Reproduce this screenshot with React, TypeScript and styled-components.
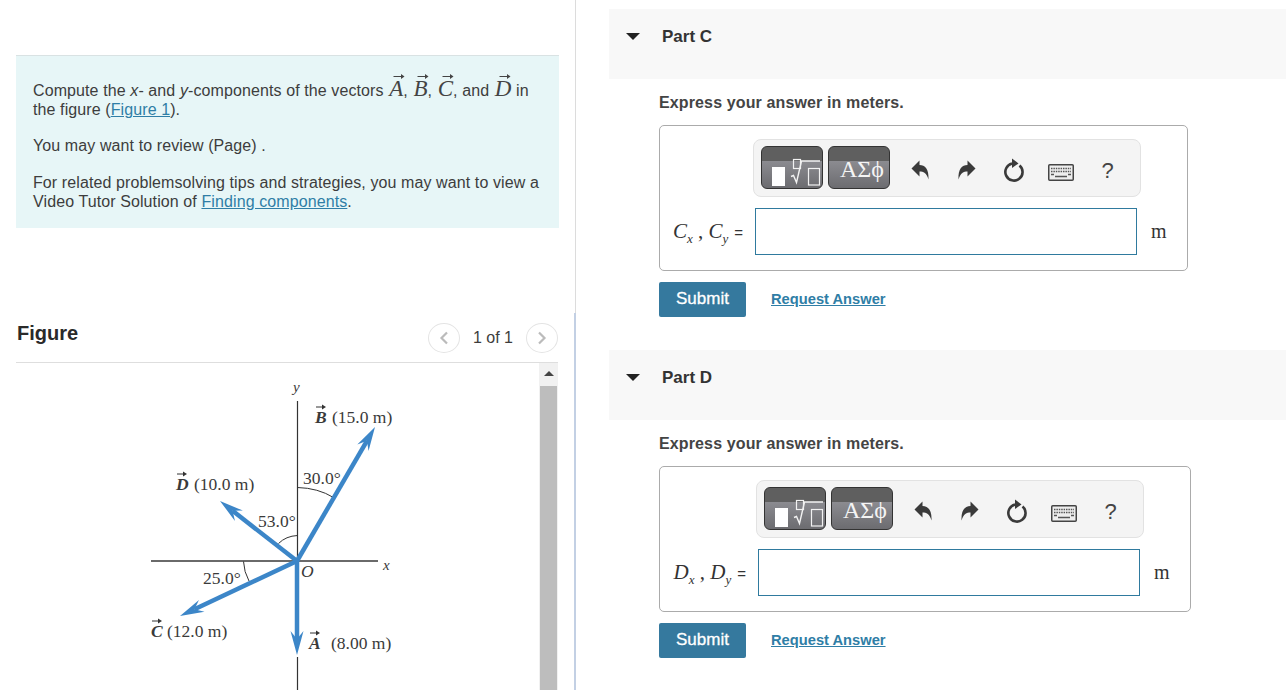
import React, { FC } from 'react';
import styled, { createGlobalStyle } from 'styled-components';

const GlobalStyle = createGlobalStyle`
  html, body {
    margin: 0;
    padding: 0;
    background: #fff;
    overflow: hidden;
    font-family: "Liberation Sans", Arial, sans-serif;
  }
`;

const Page = styled.div`
  display: flex;
  width: 1286px;
  height: 690px;
  overflow: hidden;
  background: #fff;
`;

const LeftColumn = styled.div`
  display: flex;
  flex-direction: column;
  flex: none;
  width: 576px;
  height: 690px;
`;

const IntroSection = styled.section`
  box-sizing: border-box;
  height: 313px;
  padding: 55px 16px 0 16px;
  border-right: 1px solid #dcdcdc;
`;

const IntroBox = styled.div`
  box-sizing: border-box;
  height: 173px;
  padding: 23px 16px 0 17px;
  background: #e7f6f7;
  border-top: 1px solid #d9e2e3;
  font-size: 16px;
  line-height: 19px;
  color: #3d3d3d;
`;

const Paragraph = styled.p`
  margin: 0 0 17px;
  letter-spacing: 0.1px;
  white-space: nowrap;

  &:last-child {
    margin-top: 18px;
  }
`;

const TextLink = styled.a`
  color: #2f7ea6;
  text-decoration: underline;
`;

const VectorLetter = styled.span`
  position: relative;
  display: inline-block;
  margin: 0 0 0 1px;
  font-family: "Liberation Serif", "DejaVu Serif", serif;
  font-style: italic;
  font-size: 23px;
  line-height: 19px;
  color: #444;

  svg {
    position: absolute;
    left: 4px;
    top: -6px;
  }
`;

const FigureSection = styled.section`
  box-sizing: border-box;
  display: flex;
  flex-direction: column;
  flex: 1;
  min-height: 0;
  padding-left: 16px;
  padding-right: 16px;
  border-right: 2px solid #c3d0e4;
`;

const FigureHeader = styled.div`
  box-sizing: border-box;
  display: flex;
  align-items: center;
  justify-content: space-between;
  height: 50px;
  padding-top: 1px;
  border-bottom: 1px solid #dedede;
`;

const FigureTitle = styled.h2`
  margin: -10px 0 0 1px;
  font-size: 20px;
  font-weight: bold;
  color: #2a2a2a;
`;

const Pager = styled.div`
  display: flex;
  align-items: center;
  gap: 13px;
  font-size: 16px;
  color: #3d3d3d;
`;

const PagerButton = styled.span`
  box-sizing: border-box;
  display: flex;
  align-items: center;
  justify-content: center;
  width: 32px;
  height: 30px;
  border: 1px solid #e4e4e4;
  border-radius: 50%;
  background: #fff;
`;

const FigurePane = styled.div`
  display: flex;
  flex: 1;
  min-height: 0;
  justify-content: space-between;
  overflow: hidden;
`;

const Scrollbar = styled.div`
  display: flex;
  flex-direction: column;
  align-items: center;
  flex: none;
  width: 19px;
  background: #f1f1f1;
`;

const ScrollArrow = styled.span`
  width: 0;
  height: 0;
  margin-top: 8px;
  border-left: 5px solid transparent;
  border-right: 5px solid transparent;
  border-bottom: 5px solid #444;
`;

const ScrollThumb = styled.div`
  flex: 1;
  width: 17px;
  margin-top: 10px;
  background: #bdbdbd;
`;

const RightColumn = styled.div`
  flex: 1;
  min-width: 0;
  padding: 9px 0 0 33px;
`;

const PartHeader = styled.div`
  box-sizing: border-box;
  display: flex;
  align-items: center;
  height: 70px;
  padding: 0 0 15px 17px;
  background: #f8f8f8;
`;

const Caret = styled.span`
  width: 0;
  height: 0;
  margin-right: 22px;
  border-left: 7px solid transparent;
  border-right: 7px solid transparent;
  border-top: 7px solid #222;
`;

const PartTitle = styled.h3`
  margin: 0;
  font-size: 17px;
  font-weight: bold;
  color: #333;
`;

const PartBody = styled.div`
  padding: 14px 0 33px 50px;
`;

const Prompt = styled.p`
  margin: 0 0 13px;
  font-size: 16px;
  font-weight: bold;
  line-height: 19px;
  letter-spacing: 0.13px;
  color: #444;
`;

const AnswerBox = styled.div<{ $labelWidth: number }>`
  box-sizing: border-box;
  width: ${p => p.$labelWidth + 433}px;
  height: 146px;
  padding-top: 13px;
  border: 1px solid #ababab;
  border-radius: 5px;
`;

const Toolbar = styled.div<{ $labelWidth: number }>`
  box-sizing: border-box;
  display: flex;
  align-items: center;
  width: 388px;
  height: 58px;
  margin-left: ${p => p.$labelWidth - 3}px;
  padding-left: 7px;
  background: #f4f4f4;
  border: 1px solid #e2e2e2;
  border-radius: 8px;
`;

const PaletteButton = styled.span`
  box-sizing: border-box;
  display: flex;
  align-items: flex-end;
  justify-content: center;
  flex: none;
  width: 62px;
  height: 43px;
  margin: -1px 5px 0 0;
  padding: 0 0 5px 6px;
  border: 1px solid #333;
  border-radius: 6px;
  background: linear-gradient(#5f5f5f 0 34%, #8b8b90 35%, #6c6c70 100%);
  color: #f4f4f4;
  font-family: "Liberation Serif", "DejaVu Serif", serif;
  font-size: 24px;
  line-height: 27px;
`;

const TemplateButton = styled(PaletteButton)`
  padding: 0;
`;

const ToolSlot = styled.span<{ $drop?: number }>`
  display: flex;
  align-items: center;
  justify-content: center;
  flex: none;
  width: 47px;
  padding-top: ${p => p.$drop ?? 3}px;
  color: #3a3a3a;

  ${PaletteButton} + & {
    margin-left: 1px;
  }
`;

const HelpMark = styled(ToolSlot)`
  font-size: 22px;
  color: #444;
`;

const AnswerRow = styled.div`
  display: flex;
  align-items: center;
  margin-top: 11px;
`;

const MathLabel = styled.div<{ $width: number }>`
  box-sizing: border-box;
  flex: none;
  width: ${p => p.$width - 1}px;
  padding-right: 12px;
  text-align: right;
  font-family: "Liberation Serif", "DejaVu Serif", serif;
  font-size: 21px;
  color: #333;
  white-space: nowrap;

  i sub {
    font-size: 13px;
    line-height: 0;
  }
`;

const Equals = styled.span`
  margin-left: 6px;
  font-family: "Liberation Sans", Arial, sans-serif;
  font-size: 15px;
`;

const AnswerInput = styled.div`
  box-sizing: border-box;
  flex: none;
  width: 382px;
  height: 47px;
  border: 1px solid #2f7a9e;
  background: #fff;
`;

const Unit = styled.span`
  margin-left: 14px;
  font-family: "Liberation Serif", "DejaVu Serif", serif;
  font-size: 20px;
  color: #333;
`;

const ActionRow = styled.div`
  display: flex;
  align-items: center;
  gap: 25px;
  margin-top: 11px;
`;

const SubmitButton = styled.button`
  width: 87px;
  height: 35px;
  padding: 0 0 2px;
  border: none;
  border-radius: 2px;
  background: #35799e;
  color: #fff;
  font-family: "Liberation Sans", Arial, sans-serif;
  font-size: 17px;
  -webkit-text-stroke: 0.3px #fff;
`;

const RequestLink = styled.a`
  margin-top: -2px;
  color: #2f7ea6;
  font-size: 14.7px;
  font-weight: bold;
  text-decoration: underline;
`;

const OverArrow: FC = () => (
  <svg width="12" height="7" viewBox="0 0 12 7">
    <path d="M0.5 3.5H10" stroke="#444" strokeWidth="1" />
    <path d="M8 1l3.5 2.5L8 6z" fill="#444" />
  </svg>
);

const Vec: FC<{ letter: string }> = ({ letter }) => (
  <VectorLetter>
    <OverArrow />
    {letter}
  </VectorLetter>
);

// barbed arrow head, tip + direction given in page coordinates
const headPoints = (x: number, y: number, ox: number, oy: number) => {
  const len = Math.hypot(x - ox, y - oy);
  const ux = (x - ox) / len;
  const uy = (y - oy) / len;
  const at = (back: number, side: number) =>
    `${x - ux * back - uy * side},${y - uy * back + ux * side}`;
  return [at(0, 0), at(24, 6.5), at(16, 0), at(24, -6.5)].join(' ');
};

const ORIGIN = { x: 297, y: 561 };
const VECTORS = [
  { x: 297, y: 655 },
  { x: 375, y: 427 },
  { x: 180, y: 616 },
  { x: 220, y: 501 },
];

const serif = { fontFamily: '"Liberation Serif", serif', fontSize: 17.5, fill: '#3a3a3a' };

const LabelArrow: FC<{ x: number; y: number }> = ({ x, y }) => (
  <g>
    <path d={`M${x} ${y}h8`} stroke="#333" strokeWidth="1" />
    <path d={`M${x + 6} ${y - 2.5}l4 2.5l-4 2.5z`} fill="#333" />
  </g>
);

const VectorFigure: FC = () => (
  <svg width="523" height="327" viewBox="16 363 523 327">
    <path d="M297.5 401V631M297.5 657V690" stroke="#333" strokeWidth="1.2" fill="none" />
    <path d="M151 561H378" stroke="#6a6a6a" strokeWidth="2" fill="none" />
    <path d="M297.5 487.5Q318 488 333.5 497.5" stroke="#333" strokeWidth="1" fill="none" />
    <path d="M297.5 535.5Q286 536 278.5 543.5" stroke="#333" strokeWidth="1" fill="none" />
    <path d="M243.5 561.5Q244 572 249 581" stroke="#333" strokeWidth="1" fill="none" />
    {VECTORS.map(v => {
      const len = Math.hypot(v.x - ORIGIN.x, v.y - ORIGIN.y);
      const ex = v.x - ((v.x - ORIGIN.x) / len) * 16;
      const ey = v.y - ((v.y - ORIGIN.y) / len) * 16;
      return (
        <g key={`${v.x}-${v.y}`}>
          <line x1={ORIGIN.x} y1={ORIGIN.y} x2={ex} y2={ey} stroke="#3c86c8" strokeWidth="4.5" />
          <polygon points={headPoints(v.x, v.y, ORIGIN.x, ORIGIN.y)} fill="#3c86c8" />
        </g>
      );
    })}
    <text {...serif} fontSize={15} x="293" y="392" fontStyle="italic">y</text>
    <text {...serif} fontSize={15} x="383" y="570" fontStyle="italic">x</text>
    <text {...serif} x="301" y="577" fontStyle="italic">O</text>
    <text {...serif} x="303" y="484">30.0°</text>
    <text {...serif} x="258" y="527">53.0°</text>
    <text {...serif} x="203" y="584">25.0°</text>

    <LabelArrow x={316} y={407} />
    <text {...serif} x="315" y="423" fontWeight="bold" fontStyle="italic">B</text>
    <text {...serif} x="332" y="423">(15.0 m)</text>
    <LabelArrow x={177} y={474} />
    <text {...serif} x="176" y="490" fontWeight="bold" fontStyle="italic">D</text>
    <text {...serif} x="194" y="490">(10.0 m)</text>
    <LabelArrow x={152} y={621} />
    <text {...serif} x="151" y="637" fontWeight="bold" fontStyle="italic">C</text>
    <text {...serif} x="167" y="637">(12.0 m)</text>
    <LabelArrow x={310} y={633} />
    <text {...serif} x="309" y="649" fontWeight="bold" fontStyle="italic">A</text>
    <text {...serif} x="331" y="649">(8.00 m)</text>
  </svg>
);

const TemplateGlyph: FC = () => (
  <svg width="60" height="41" viewBox="0 0 60 41">
    <rect x="10" y="20" width="13" height="19" fill="#fff" />
    <path d="M29 29.5l2.5 -1l3 7l5 -21.5H58" stroke="#f2f2f2" strokeWidth="1.4" fill="none" />
    <rect x="31.5" y="12.5" width="7" height="9" stroke="#f2f2f2" strokeWidth="1.2" fill="none" />
    <rect x="46.5" y="21.5" width="11" height="16.5" stroke="#f2f2f2" strokeWidth="1.2" fill="none" />
  </svg>
);

const UndoIcon: FC<{ flip?: boolean }> = ({ flip }) => (
  <svg width="18" height="20" viewBox="0 0 18 20" style={flip ? { transform: 'scaleX(-1)' } : undefined}>
    <path d="M0.5 8.5L8.5 0.5V5C14 5 18 9 17.5 19.5C15.5 13 12.5 11.5 8.5 11.5V16.5Z" fill="#3a3a3a" />
  </svg>
);

const RefreshIcon: FC = () => (
  <svg width="22" height="26" viewBox="0 0 22 26">
    <path d="M16.5 8.4A8.6 8.6 0 1 1 9 6.6" stroke="#3a3a3a" strokeWidth="2.6" fill="none" />
    <path d="M9 1.5L15.5 6.5L9 11Z" fill="#3a3a3a" />
  </svg>
);

const KeyboardIcon: FC = () => (
  <svg width="26" height="17" viewBox="0 0 26 17">
    <rect x="0.75" y="0.75" width="24.5" height="15.5" rx="1" stroke="#444" strokeWidth="1.5" fill="#eee" />
    <path d="M3 4.5h20M3 7.5h20" stroke="#555" strokeWidth="1.6" strokeDasharray="1.5 0.9" />
    <path d="M3 10.5h3M7 12.5h12M20 10.5h3" stroke="#555" strokeWidth="1.6" />
  </svg>
);

const AnswerPart: FC<{ part: string; labelWidth: number }> = ({ part, labelWidth }) => (
  <>
    <PartHeader>
      <Caret />
      <PartTitle>Part {part}</PartTitle>
    </PartHeader>
    <PartBody>
      <Prompt>Express your answer in meters.</Prompt>
      <AnswerBox $labelWidth={labelWidth}>
        <Toolbar $labelWidth={labelWidth}>
          <TemplateButton><TemplateGlyph /></TemplateButton>
          <PaletteButton>ΑΣϕ</PaletteButton>
          <ToolSlot><UndoIcon /></ToolSlot>
          <ToolSlot><UndoIcon flip /></ToolSlot>
          <ToolSlot><RefreshIcon /></ToolSlot>
          <ToolSlot $drop={8}><KeyboardIcon /></ToolSlot>
          <HelpMark $drop={5}>?</HelpMark>
        </Toolbar>
        <AnswerRow>
          <MathLabel $width={labelWidth}>
            <i>{part}<sub>x</sub></i> , <i>{part}<sub>y</sub></i>
            <Equals>=</Equals>
          </MathLabel>
          <AnswerInput />
          <Unit>m</Unit>
        </AnswerRow>
      </AnswerBox>
      <ActionRow>
        <SubmitButton>Submit</SubmitButton>
        <RequestLink href="#">Request Answer</RequestLink>
      </ActionRow>
    </PartBody>
  </>
);

const App: FC = () => (
  <Page>
    <GlobalStyle />
    <LeftColumn>
      <IntroSection>
        <IntroBox>
          <Paragraph>
            Compute the <i>x</i>- and <i>y</i>-components of the vectors <Vec letter="A" />, <Vec letter="B" />, <Vec letter="C" />, and <Vec letter="D" /> in
            <br />
            the figure (<TextLink href="#">Figure 1</TextLink>).
          </Paragraph>
          <Paragraph>You may want to review (Page) .</Paragraph>
          <Paragraph>
            For related problemsolving tips and strategies, you may want to view a
            <br />
            Video Tutor Solution of <TextLink href="#">Finding components</TextLink>.
          </Paragraph>
        </IntroBox>
      </IntroSection>
      <FigureSection>
        <FigureHeader>
          <FigureTitle>Figure</FigureTitle>
          <Pager>
            <PagerButton>
              <svg width="10" height="14" viewBox="0 0 10 14"><path d="M8 1.5L2.5 7L8 12.5" stroke="#bbb" strokeWidth="2.2" fill="none" /></svg>
            </PagerButton>
            1 of 1
            <PagerButton>
              <svg width="10" height="14" viewBox="0 0 10 14"><path d="M2 1.5L7.5 7L2 12.5" stroke="#bbb" strokeWidth="2.2" fill="none" /></svg>
            </PagerButton>
          </Pager>
        </FigureHeader>
        <FigurePane>
          <VectorFigure />
          <Scrollbar>
            <ScrollArrow />
            <ScrollThumb />
          </Scrollbar>
        </FigurePane>
      </FigureSection>
    </LeftColumn>
    <RightColumn>
      <AnswerPart part="C" labelWidth={96} />
      <AnswerPart part="D" labelWidth={99} />
    </RightColumn>
  </Page>
);

export default App;
